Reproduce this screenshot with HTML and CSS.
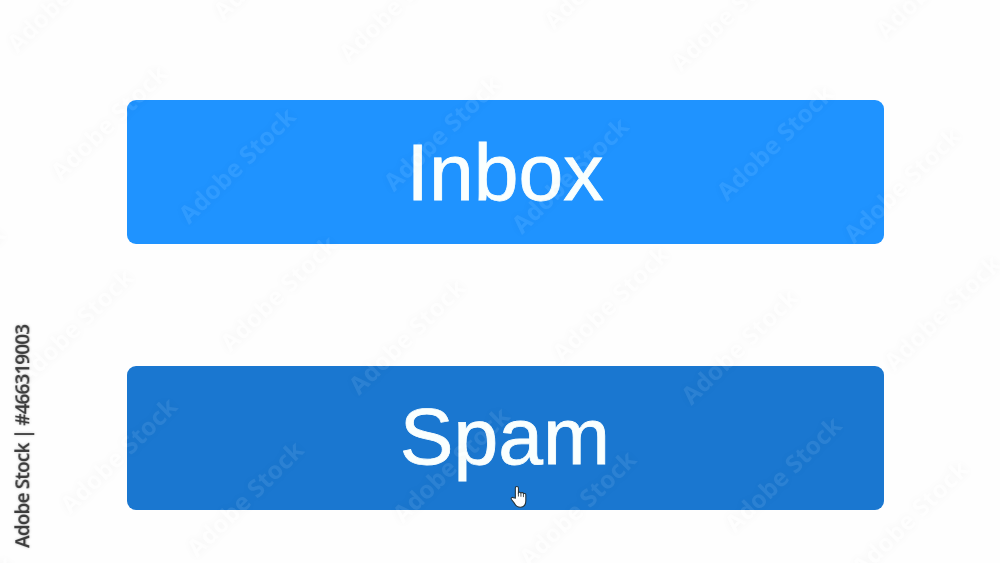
FILE: index.html
```html
<!DOCTYPE html>
<html lang="en">
<head>
<meta charset="utf-8">
<title>Inbox / Spam</title>
<link rel="stylesheet" href="styles.css">
</head>
<body>
<main class="stage">
  <button class="button">Inbox</button>
  <button class="button button--hover">Spam</button>
</main>
<svg class="cursor" viewBox="0 0 20 26" aria-hidden="true">
  <path d="M6.2 13.6V3.1a1.6 1.6 0 0 1 3.2 0V8a1.5 1.5 0 0 1 2.6.5 1.5 1.5 0 0 1 2.7.7 1.4 1.4 0 0 1 2.4 1.1v6.2c0 3.9-1.8 6.6-5.6 6.6-3.2 0-4.8-1.5-6-3.7L2 14.8c-.7-1.4 1-2.6 2.2-1.5z"/>
  <path class="cursor__lines" d="M9.4 8v4M12 8.8v3.4M14.6 9.6v3"/>
</svg>
<svg class="overlay" viewBox="0 0 1000 563">
  <g class="watermark" transform="translate(2 1)">
    <text transform="translate(15.5 53) rotate(-44.5)" textLength="152">Adobe Stock</text>
    <text transform="translate(221.5 20.5) rotate(-44.5)" textLength="152">Adobe Stock</text>
    <text transform="translate(347 62.5) rotate(-44.5)" textLength="152">Adobe Stock</text>
    <text transform="translate(552 30) rotate(-44.5)" textLength="152">Adobe Stock</text>
    <text transform="translate(679 72) rotate(-44.5)" textLength="152">Adobe Stock</text>
    <text transform="translate(884 39.5) rotate(-44.5)" textLength="152">Adobe Stock</text>
    <text transform="translate(59 181) rotate(-44.5)" textLength="152">Adobe Stock</text>
    <text transform="translate(187 224) rotate(-44.5)" textLength="152">Adobe Stock</text>
    <text transform="translate(392 191.5) rotate(-44.5)" textLength="152">Adobe Stock</text>
    <text transform="translate(520 234) rotate(-44.5)" textLength="152">Adobe Stock</text>
    <text transform="translate(725 201) rotate(-44.5)" textLength="152">Adobe Stock</text>
    <text transform="translate(852 243.5) rotate(-44.5)" textLength="152">Adobe Stock</text>
    <text transform="translate(-103 342) rotate(-44.5)" textLength="152">Adobe Stock</text>
    <text transform="translate(25 385) rotate(-44.5)" textLength="152">Adobe Stock</text>
    <text transform="translate(228.5 352) rotate(-44.5)" textLength="152">Adobe Stock</text>
    <text transform="translate(357 395) rotate(-44.5)" textLength="152">Adobe Stock</text>
    <text transform="translate(560.5 362) rotate(-44.5)" textLength="152">Adobe Stock</text>
    <text transform="translate(689.5 405) rotate(-44.5)" textLength="152">Adobe Stock</text>
    <text transform="translate(892.5 371.5) rotate(-44.5)" textLength="152">Adobe Stock</text>
    <text transform="translate(68.5 514) rotate(-44.5)" textLength="152">Adobe Stock</text>
    <text transform="translate(195 557.5) rotate(-44.5)" textLength="152">Adobe Stock</text>
    <text transform="translate(401 523.5) rotate(-44.5)" textLength="152">Adobe Stock</text>
    <text transform="translate(527.5 567) rotate(-44.5)" textLength="152">Adobe Stock</text>
    <text transform="translate(733 533) rotate(-44.5)" textLength="152">Adobe Stock</text>
    <text transform="translate(860 576.5) rotate(-44.5)" textLength="152">Adobe Stock</text>
    <text transform="translate(-94 672) rotate(-44.5)" textLength="152">Adobe Stock</text>
  </g>
  <text class="credit" transform="translate(29.3 548) rotate(-90)" textLength="224">Adobe Stock | #466319003</text>
</svg>
</body>
</html>
```
FILE: styles.css
```css
* {
  box-sizing: border-box;
}

body {
  margin: 0;
  height: 563px;
  overflow: hidden;
  background: #fefefe;
}

.stage {
  display: flex;
  flex-direction: column;
  gap: 122px;
  padding: 100px 116px 0 127px;
}

.button {
  height: 144px;
  padding: 0 1px 0 0;
  border: 0;
  border-radius: 9px;
  background: #1f93ff;
  color: #fafffe;
  font: 80.5px/1 "Liberation Sans", Arial, sans-serif;
  -webkit-text-stroke: 0.8px #fafffe;
}

.button--hover {
  padding: 0 1px 3px 0;
  background: #1a77d0;
}

.cursor {
  position: absolute;
  left: 509px;
  top: 485px;
  width: 20px;
  height: 25px;
  fill: #fff;
  stroke: #263238;
  stroke-width: 1.1;
}

.cursor__lines {
  fill: none;
  stroke-width: 0.9;
}

.overlay {
  position: absolute;
  left: 0;
  top: 0;
  width: 1000px;
  height: 563px;
  pointer-events: none;
}

.watermark {
  opacity: 0.075;
  fill: #fff;
  font: 700 24.5px "Noto Sans", sans-serif;
  text-shadow: 0 0 9px rgba(0, 0, 0, 0.55);
}

.credit {
  fill: #3c3c3c;
  font: 600 19px "Noto Sans", sans-serif;
  text-shadow: 0 0 3px rgba(0, 0, 0, 0.22);
}
```
